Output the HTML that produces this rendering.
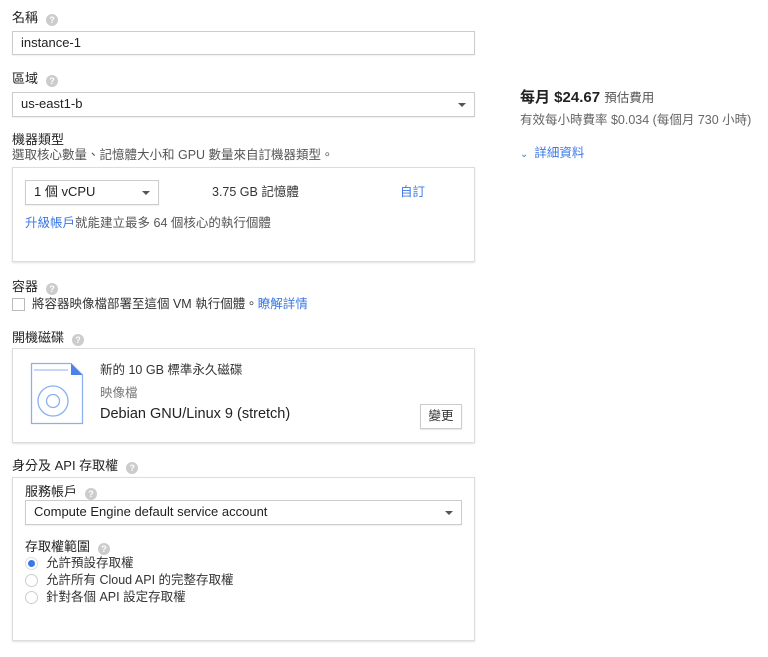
<!DOCTYPE html>
<html><head><meta charset="utf-8"><style>
body{margin:0;width:768px;height:657px;background:#fff;font-family:"Liberation Sans","Noto Sans CJK TC",sans-serif;font-size:12px;color:#333;position:relative;overflow:hidden}
.a{position:absolute;white-space:nowrap;line-height:1.15}
.lbl{font-size:13px;color:#222}
.q{display:inline-block;width:12px;height:12px;border-radius:50%;background:#ccc;color:#fff;font-size:9px;line-height:12px;text-align:center;vertical-align:-1px;margin-left:8px;font-weight:bold}
.box{position:absolute;border:1px solid #ddd;box-shadow:0 1px 2px rgba(0,0,0,.12);background:#fff}
.inp{position:absolute;border:1px solid #ccc;box-sizing:border-box;box-shadow:0 1px 1px rgba(0,0,0,.06);padding-left:8px;line-height:22px;font-size:13px;color:#222}
.arr{position:absolute;right:8px;top:10px;width:0;height:0;border-left:4px solid transparent;border-right:4px solid transparent;border-top:4px solid #555}
.blue{color:#3b78e7}
.rad{position:absolute;width:11px;height:11px;border:1px solid #ccc;border-radius:50%}
</style></head><body>
<div class="a lbl" style="left:12px;top:11px">名稱<span class="q">?</span></div>
<div class="inp" style="left:12px;top:31px;width:463px;height:24px">instance-1</div>
<div class="a lbl" style="left:12px;top:72px">區域<span class="q">?</span></div>
<div class="inp" style="left:12px;top:92px;width:463px;height:25px">us-east1-b<div class="arr"></div></div>
<div class="a lbl" style="left:12px;top:133px">機器類型</div>
<div class="a" style="left:12px;top:148px;color:#555;font-size:12.5px">選取核心數量、記憶體大小和 GPU 數量來自訂機器類型。</div>
<div class="box" style="left:12px;top:167px;width:461px;height:93px"></div>
<div class="inp" style="left:25px;top:180px;width:134px;height:25px">1 個 vCPU<div class="arr"></div></div>
<div class="a" style="left:212px;top:185px;font-size:12.5px">3.75 GB 記憶體</div>
<div class="a blue" style="left:400px;top:185px;font-size:12.5px">自訂</div>
<div class="a" style="left:25px;top:216px;color:#555;font-size:12.5px"><span class="blue">升級帳戶</span>就能建立最多 64 個核心的執行個體</div>

<div class="a lbl" style="left:12px;top:280px">容器<span class="q">?</span></div>
<div class="a" style="left:12px;top:298px;width:11px;height:11px;border:1px solid #bbb"></div>
<div class="a" style="left:32px;top:297px;font-size:12.5px">將容器映像檔部署至這個 VM 執行個體。<span class="blue">瞭解詳情</span></div>
<div class="a lbl" style="left:12px;top:331px">開機磁碟<span class="q">?</span></div>
<div class="box" style="left:12px;top:348px;width:461px;height:93px"></div>
<svg class="a" style="left:30px;top:362px" width="54" height="63" viewBox="0 0 54 63"><path d="M1.5 1.5H41L52.5 13V61.5H1.5Z" fill="#fff" stroke="#8ab0f0" stroke-width="1.3"/><path d="M41 1.5V13H52.5Z" fill="#4a84ea"/><line x1="4" y1="8" x2="38" y2="8" stroke="#8ab0f0"/><circle cx="23" cy="39" r="15" fill="none" stroke="#8ab0f0" stroke-width="1.3"/><circle cx="23" cy="39" r="6.5" fill="none" stroke="#8ab0f0" stroke-width="1.3"/></svg>
<div class="a" style="left:100px;top:363px;font-size:12.5px">新的 10 GB 標準永久磁碟</div>
<div class="a" style="left:100px;top:386px;font-size:12.5px;color:#777">映像檔</div>
<div class="a" style="left:100px;top:406px;font-size:14.5px;color:#222">Debian GNU/Linux 9 (stretch)</div>
<div class="a" style="left:420px;top:404px;width:40px;height:23px;border:1px solid #ccc;box-shadow:0 1px 1px rgba(0,0,0,.1);text-align:center;line-height:23px;font-size:12.5px">變更</div>

<div class="a lbl" style="left:12px;top:459px">身分及 API 存取權<span class="q">?</span></div>
<div class="box" style="left:12px;top:477px;width:461px;height:162px"></div>
<div class="a lbl" style="left:25px;top:485px">服務帳戶<span class="q">?</span></div>
<div class="inp" style="left:25px;top:500px;width:437px;height:25px">Compute Engine default service account<div class="arr"></div></div>
<div class="a lbl" style="left:25px;top:540px">存取權範圍<span class="q">?</span></div>
<div class="rad" style="left:25px;top:557px;border-color:#ddd"><div style="position:absolute;left:2px;top:2px;width:7px;height:7px;border-radius:50%;background:#3b78e7"></div></div>
<div class="a" style="left:46px;top:556px;font-size:12.5px">允許預設存取權</div>
<div class="rad" style="left:25px;top:574px"></div>
<div class="a" style="left:46px;top:573px;font-size:12.5px">允許所有 Cloud API 的完整存取權</div>
<div class="rad" style="left:25px;top:591px"></div>
<div class="a" style="left:46px;top:590px;font-size:12.5px">針對各個 API 設定存取權</div>

<div class="a" style="left:520px;top:89px;font-size:15px;color:#222;font-weight:bold">每月 $24.67 <span style="font-weight:normal;font-size:12.5px;color:#555">預估費用</span></div>
<div class="a" style="left:520px;top:113px;font-size:12.5px;color:#666">有效每小時費率 $0.034 (每個月 730 小時)</div>
<div class="a blue" style="left:520px;top:146px;font-size:12.5px"><span style="font-size:10px;margin-right:6px">⌄</span>詳細資料</div>
</body></html>
